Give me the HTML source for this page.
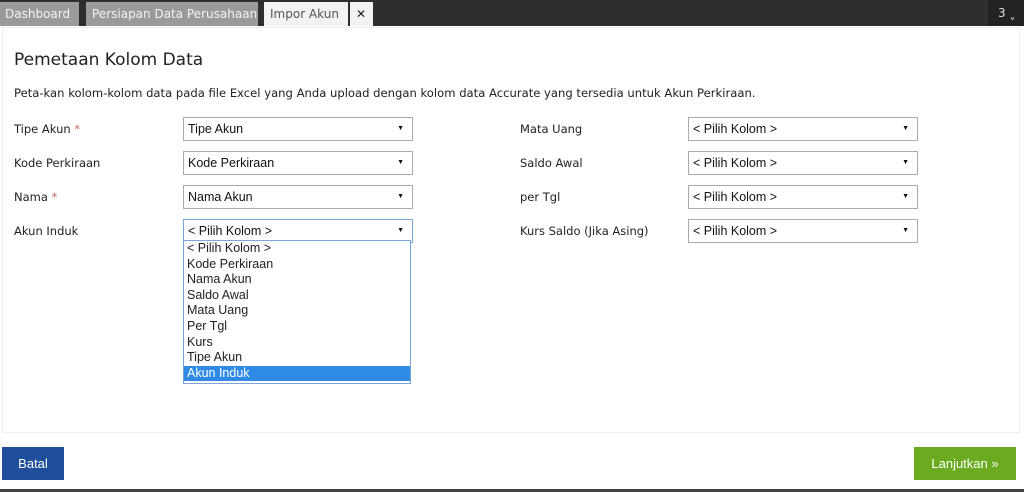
<!DOCTYPE html>
<html><head><style>
body{margin:0;width:1024px;height:492px;background:#fff;font-family:"DejaVu Sans","Liberation Sans",sans-serif;position:relative;overflow:hidden;color:#222}
.top{position:absolute;left:0;top:0;width:1024px;height:26px;background:#2e2e2e}
.tab{position:absolute;top:2px;height:24px;background:#9a9a9a;color:#f4f4f4;font-size:12px;line-height:24px;padding:0 6px;box-sizing:border-box;white-space:nowrap;overflow:hidden}
.a{background:#f2f2f2;color:#555}
.panel{position:absolute;left:2px;top:27px;width:1016px;height:404px;border:1px solid #eee;background:#fff}
h1{position:absolute;left:14px;top:50px;margin:0;font-weight:normal;font-size:17px;color:#222}
.p{position:absolute;left:14px;top:86px;font-size:11.6px;color:#222}
.l{position:absolute;font-size:11.5px;color:#222}
.s{position:absolute;width:230px;height:24px;border:1px solid #aaa;box-sizing:border-box;background:#fff;font-family:"Liberation Sans",sans-serif;font-size:12.5px;line-height:22px;padding-left:4px;color:#111}
.s:after{content:"▼";position:absolute;right:8px;top:0;font-size:7px}
.dd{position:absolute;left:183px;top:240px;width:228px;height:144px;border:1px solid #7aa7d8;box-sizing:border-box;background:#fff;font-family:"Liberation Sans",sans-serif;font-size:12.5px}
.dd div{height:15.6px;line-height:15.6px;padding-left:3px}
.btn{position:absolute;top:447px;height:33px;color:#fff;font-family:"Liberation Sans",sans-serif;font-size:13px;line-height:33px;text-align:center}
</style></head><body>
<div class="top"></div>
<div class="tab" style="left:0;width:79px;padding:0 5px">Dashboard</div>
<div class="tab" style="left:86px;width:172px">Persiapan Data Perusahaan</div>
<div class="tab a" style="left:264px;width:84px">Impor Akun</div>
<div class="tab a" style="left:350px;width:23px;color:#222;font-weight:bold;padding:0 6px">✕</div>
<div style="position:absolute;left:988px;top:0;width:36px;height:26px;background:#222;color:#ddd;font-size:12px;line-height:26px;padding-left:10px;box-sizing:border-box">3 ˬ</div>
<div class="panel"></div>
<h1>Pemetaan Kolom Data</h1>
<div class="p">Peta-kan kolom-kolom data pada file Excel yang Anda upload dengan kolom data Accurate yang tersedia untuk Akun Perkiraan.</div>
<div class="l" style="left:14px;top:122px">Tipe Akun <span style="color:#c66">*</span></div>
<div class="l" style="left:14px;top:156px">Kode Perkiraan</div>
<div class="l" style="left:14px;top:190px">Nama <span style="color:#c66">*</span></div>
<div class="l" style="left:14px;top:224px">Akun Induk</div>
<div class="s" style="left:183px;top:117px">Tipe Akun</div>
<div class="s" style="left:183px;top:151px">Kode Perkiraan</div>
<div class="s" style="left:183px;top:185px">Nama Akun</div>
<div class="s" style="left:183px;top:219px;border-color:#7aa7d8">&lt; Pilih Kolom &gt;</div>
<div class="l" style="left:520px;top:122px">Mata Uang</div>
<div class="l" style="left:520px;top:156px">Saldo Awal</div>
<div class="l" style="left:520px;top:190px">per Tgl</div>
<div class="l" style="left:520px;top:224px">Kurs Saldo (Jika Asing)</div>
<div class="s" style="left:688px;top:117px">&lt; Pilih Kolom &gt;</div>
<div class="s" style="left:688px;top:151px">&lt; Pilih Kolom &gt;</div>
<div class="s" style="left:688px;top:185px">&lt; Pilih Kolom &gt;</div>
<div class="s" style="left:688px;top:219px">&lt; Pilih Kolom &gt;</div>
<div class="dd"><div>&lt; Pilih Kolom &gt;</div><div>Kode Perkiraan</div><div>Nama Akun</div><div>Saldo Awal</div><div>Mata Uang</div><div>Per Tgl</div><div>Kurs</div><div>Tipe Akun</div><div style="background:#2f8ae6;color:#fff">Akun Induk</div></div>
<div class="btn" style="left:2px;width:62px;background:#1f4e9c">Batal</div>
<div class="btn" style="left:914px;width:102px;background:#6aab1f">Lanjutkan »</div>
<div style="position:absolute;left:0;top:489px;width:1024px;height:3px;background:#444"></div>
</body></html>
